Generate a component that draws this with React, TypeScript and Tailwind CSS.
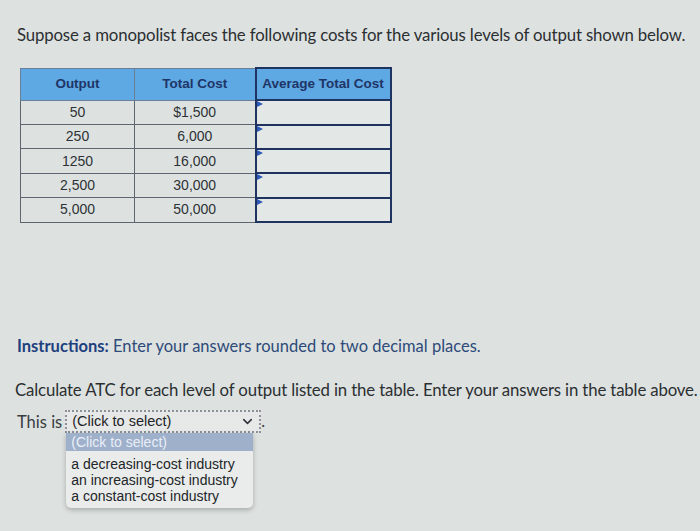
import { ChevronDown } from 'lucide-react';

const rows = [
  { output: '50', cost: '$1,500' },
  { output: '250', cost: '6,000' },
  { output: '1250', cost: '16,000' },
  { output: '2,500', cost: '30,000' },
  { output: '5,000', cost: '50,000' },
];

const options = ['a decreasing-cost industry', 'an increasing-cost industry', 'a constant-cost industry'];

export default function App() {
  return (
    <div className="w-[700px] h-[531px] overflow-hidden bg-[#dde2e1] text-[#2c2f31] font-['Lato','Open_Sans',sans-serif]">
      <p className="pt-[22px] pl-[17px] text-[16.8px] tracking-[-0.15px]">
        Suppose a monopolist faces the following costs for the various levels of output shown below.
      </p>

      {/* Cost table */}
      <table className="mt-[20px] ml-[20px] border-collapse font-['Liberation_Sans',Arial,sans-serif] text-[14px]">
        <thead>
          <tr className="h-[32px] bg-[#5ea8e4] text-[#1f3566] font-bold text-[13.5px]">
            <th className="w-[114px] border border-[#6a7f96]">Output</th>
            <th className="w-[121px] border border-[#6a7f96]">Total Cost</th>
            <th className="w-[135px] border-2 border-[#1f3360]">Average Total Cost</th>
          </tr>
        </thead>
        <tbody>
          {rows.map(r => (
            <tr key={r.output} className="h-[24.4px] text-[#2e3236]">
              <td className="border border-[#5d6670] text-center">{r.output}</td>
              <td className="border border-[#5d6670] text-center">{r.cost}</td>
              <td className="relative border-2 border-[#1f3360] bg-[#e3e7e6]">
                <span className="absolute left-0 top-0 w-0 h-0 border-y-[3px] border-y-transparent border-l-[6px] border-l-[#2c58b8]" />
              </td>
            </tr>
          ))}
        </tbody>
      </table>

      <p className="mt-[111px] pl-[17px] text-[16.5px] text-[#2e4a78]">
        <span className="font-bold text-[#1d3f7e]">Instructions:</span> Enter your answers rounded to two decimal places.
      </p>

      <p className="mt-[18px] pl-[15px] text-[16.8px] tracking-[-0.15px]">
        Calculate ATC for each level of output listed in the table. Enter your answers in the table above.
      </p>

      <div className="mt-[8px] pl-[17px] flex items-start">
        <span className="text-[16.5px] leading-[22px] text-[#3a3d40] pt-[1px]">This is</span>
        <div className="ml-[3px] relative">
          <div className="flex items-center w-[196px] h-[23px] border-2 border-dotted border-[#8b9099] bg-[#e6e9e8] pl-[5px] pr-[4px] font-['Liberation_Sans',Arial,sans-serif] text-[14.5px] text-[#1f2326]">
            <span className="flex-1">(Click to select)</span>
            <ChevronDown size={15} strokeWidth={2.5} className="text-[#30343a]" />
          </div>
          <div className="w-[187px] ml-[1px] rounded-b-[5px] bg-[#e9ecea] shadow-[0_2px_5px_rgba(0,0,0,0.25)] overflow-hidden font-['Liberation_Sans',Arial,sans-serif] text-[14px] leading-[16px] text-[#222529] pb-[4px]">
            <div className="bg-[#9fb0cb] text-[#e9eef7] pl-[5px] h-[18px] leading-[18px]">(Click to select)</div>
            <div className="pt-[5px]">
              {options.map(o => (
                <div key={o} className="pl-[5px]">{o}</div>
              ))}
            </div>
          </div>
        </div>
        <span className="text-[16.5px] leading-[22px] text-[#3a3d40]">.</span>
      </div>
    </div>
  );
}
